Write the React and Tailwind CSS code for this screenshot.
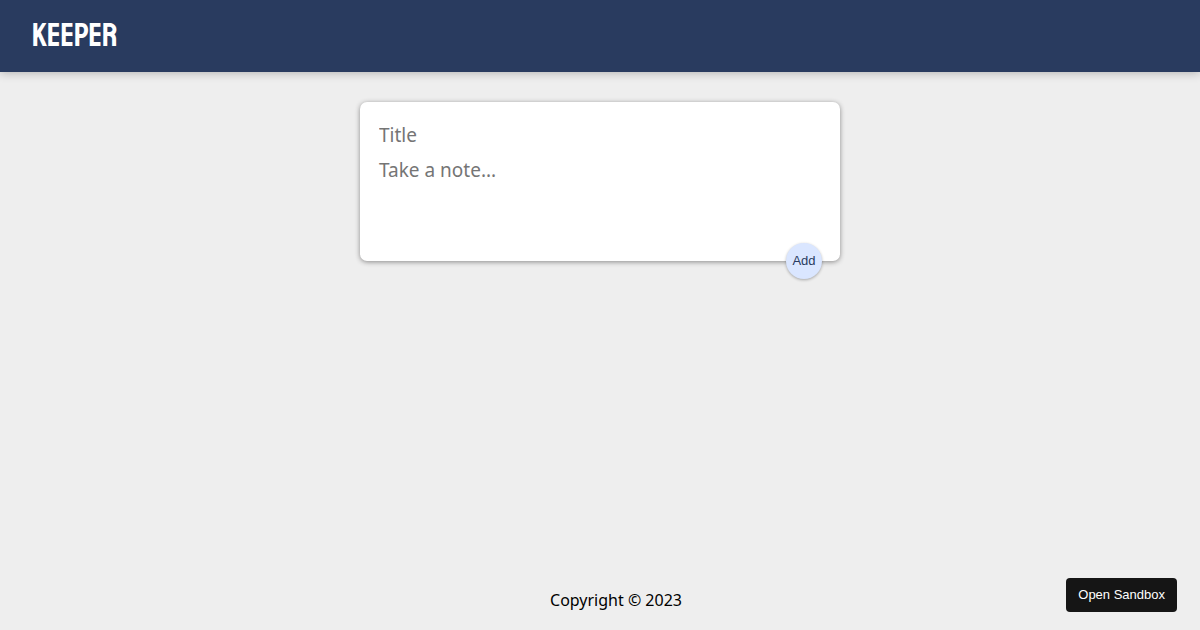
import { useState } from 'react';

function Header() {
  return (
    <header className="bg-[#293b5f] px-8 h-18 flex items-center shadow-[0_0_10px_0_rgba(0,0,0,0.3)]">
      <h1 className="font-['Staatliches','Bebas_Neue','Roboto',sans-serif] text-[32px] font-normal text-white">KEEPER</h1>
    </header>
  );
}

function CreateArea({ onAdd }) {
  const [note, setNote] = useState({ title: '', content: '' });

  const handleChange = (event) => {
    const { name, value } = event.target;
    setNote((prev) => ({ ...prev, [name]: value }));
  };

  const handleSubmit = (event) => {
    event.preventDefault();
    onAdd(note);
    setNote({ title: '', content: '' });
  };

  return (
    <form
      onSubmit={handleSubmit}
      className="relative mx-auto mt-[30px] w-full max-w-[480px] rounded-[7px] bg-white px-[15px] pt-[15px] pb-[17px] shadow-[0_1px_5px_rgb(138,137,137)]"
    >
      <input
        name="title"
        aria-label="Title"
        value={note.title}
        onChange={handleChange}
        placeholder="Title"
        className="block w-full px-1 pt-1 pb-[3px] text-[19px] leading-7 placeholder-[#757575] outline-none"
      />
      <textarea
        name="content"
        aria-label="Note"
        rows={3}
        value={note.content}
        onChange={handleChange}
        placeholder="Take a note..."
        className="block w-full resize-none p-1 text-[19px] leading-7 placeholder-[#757575] outline-none"
      />
      <button
        type="submit"
        className="absolute right-[18px] -bottom-[18px] size-9 rounded-full bg-[#dae6ff] font-['Liberation_Sans',sans-serif] text-[13px] text-[#293b5f] shadow-[0_1px_3px_rgba(0,0,0,0.3)]"
      >
        Add
      </button>
    </form>
  );
}

function Note({ title, content, onDelete }) {
  return (
    <article className="w-60 rounded-[7px] bg-white p-4 shadow-md">
      <h2 className="text-lg">{title}</h2>
      <p className="mb-2 whitespace-pre-wrap">{content}</p>
      <button onClick={onDelete} className="text-sm text-[#293b5f]">
        Delete
      </button>
    </article>
  );
}

export default function App() {
  const [notes, setNotes] = useState([]);

  const addNote = (note) => setNotes((prev) => [...prev, note]);
  const deleteNote = (id) => setNotes((prev) => prev.filter((_, index) => index !== id));

  return (
    <div className="flex min-h-screen flex-col bg-[#eee] font-['Noto_Sans',sans-serif] text-black">
      <Header />
      <main className="flex-1">
        <CreateArea onAdd={addNote} />
        <div className="flex flex-wrap gap-4 p-8 empty:hidden">
          {notes.map((note, index) => (
            <Note key={index} {...note} onDelete={() => deleteNote(index)} />
          ))}
        </div>
      </main>
      <footer className="grid grid-cols-[1fr_auto_1fr] items-end pl-[55px] pr-[23px] pb-[18px]">
        <p className="col-start-2 text-base">Copyright © 2023</p>
        <a
          href="#sandbox"
          className="justify-self-end rounded bg-[#151515] px-3 py-2 font-['Liberation_Sans',sans-serif] text-[13px] leading-[18px] text-white"
        >
          Open Sandbox
        </a>
      </footer>
    </div>
  );
}
